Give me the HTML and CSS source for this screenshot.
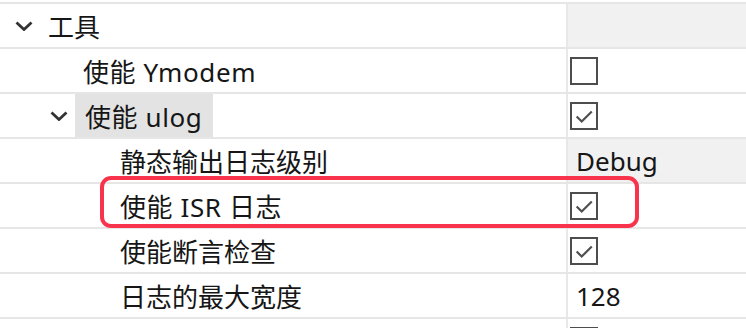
FILE: index.html
```html
<!DOCTYPE html>
<html lang="zh">
<head>
<meta charset="utf-8">
<link rel="stylesheet" href="styles.css">
</head>
<body>
<div class="tree">
  <div class="row">
    <div class="name lv0">
      <svg class="chev" viewBox="0 0 18 10"><path d="M1.5 1.5 L9 8.5 L16.5 1.5" /></svg>
      <span>工具</span>
    </div>
    <div class="val shade"></div>
  </div>
  <div class="row">
    <div class="name lv1"><span class="lat">使能 Ymodem</span></div>
    <div class="val"><span class="cb"></span></div>
  </div>
  <div class="row">
    <div class="name lv1c">
      <svg class="chev" viewBox="0 0 18 10"><path d="M1.5 1.5 L9 8.5 L16.5 1.5" /></svg>
      <span class="hl lat">使能 ulog</span>
    </div>
    <div class="val"><span class="cb"><svg viewBox="0 0 24 24"><path d="M4 12.5 L9.5 18 L20.5 7" /></svg></span></div>
  </div>
  <div class="row">
    <div class="name lv2"><span>静态输出日志级别</span></div>
    <div class="val shade"><span class="txt">Debug</span></div>
  </div>
  <div class="row">
    <div class="name lv2"><span class="lat">使能 ISR 日志</span></div>
    <div class="val"><span class="cb"><svg viewBox="0 0 24 24"><path d="M4 12.5 L9.5 18 L20.5 7" /></svg></span></div>
  </div>
  <div class="row">
    <div class="name lv2"><span>使能断言检查</span></div>
    <div class="val"><span class="cb"><svg viewBox="0 0 24 24"><path d="M4 12.5 L9.5 18 L20.5 7" /></svg></span></div>
  </div>
  <div class="row">
    <div class="name lv2"><span>日志的最大宽度</span></div>
    <div class="val"><span class="txt">128</span></div>
  </div>
  <div class="row">
    <div class="name lv2"><span>使能日志颜色输出</span></div>
    <div class="val"><span class="cb"><svg viewBox="0 0 24 24"><path d="M4 12.5 L9.5 18 L20.5 7" /></svg></span></div>
  </div>
  <div class="mark"></div>
</div>
</body>
</html>
```
FILE: styles.css
```css
html, body {
  margin: 0;
  padding: 0;
  background: #ffffff;
  overflow: hidden;
}
.tree {
  position: relative;
  width: 746px;
  height: 328px;
  overflow: hidden;
  padding-top: 2px;
  box-sizing: border-box;
  font-family: "Noto Sans", "Noto Sans CJK SC", sans-serif;
  font-size: 26px;
  color: #161616;
}
.row {
  display: grid;
  grid-template-columns: 568px 1fr;
  height: 45px;
  box-sizing: border-box;
  border-top: 2px solid #e6e6e6;
}
.name {
  display: flex;
  align-items: center;
  box-sizing: border-box;
  border-right: 2px solid #e8e8e8;
  white-space: nowrap;
}
.lat { letter-spacing: 0.6px; }
.lv0 { padding-left: 15px; }
.lv1 { padding-left: 83px; }
.lv1c { padding-left: 50px; }
.lv2 { padding-left: 120px; }
.chev {
  width: 18px;
  height: 10px;
  fill: none;
  stroke: #333333;
  stroke-width: 2.8;
  flex: none;
}
.lv0 .chev { margin-right: 15px; }
.lv1c .chev { margin-right: 7px; }
.hl {
  align-self: stretch;
  display: flex;
  align-items: center;
  padding: 0 10px;
  width: 138px;
  box-sizing: border-box;
  background: #e3e3e3;
}
.val {
  display: flex;
  align-items: center;
  padding-left: 2px;
}
.shade { background: #f1f1f1; }
.txt { padding-left: 6px; }
.cb {
  display: flex;
  width: 28px;
  height: 28px;
  box-sizing: border-box;
  border: 2px solid #4d4d4d;
  background: #ffffff;
  align-items: center;
  justify-content: center;
}
.cb svg {
  width: 22px;
  height: 22px;
  fill: none;
  stroke: #505050;
  stroke-width: 2.4;
}
.mark {
  position: absolute;
  left: 100px;
  top: 176px;
  width: 539px;
  height: 52px;
  box-sizing: border-box;
  border: 4px solid #f7344b;
  border-radius: 11px;
}
```
